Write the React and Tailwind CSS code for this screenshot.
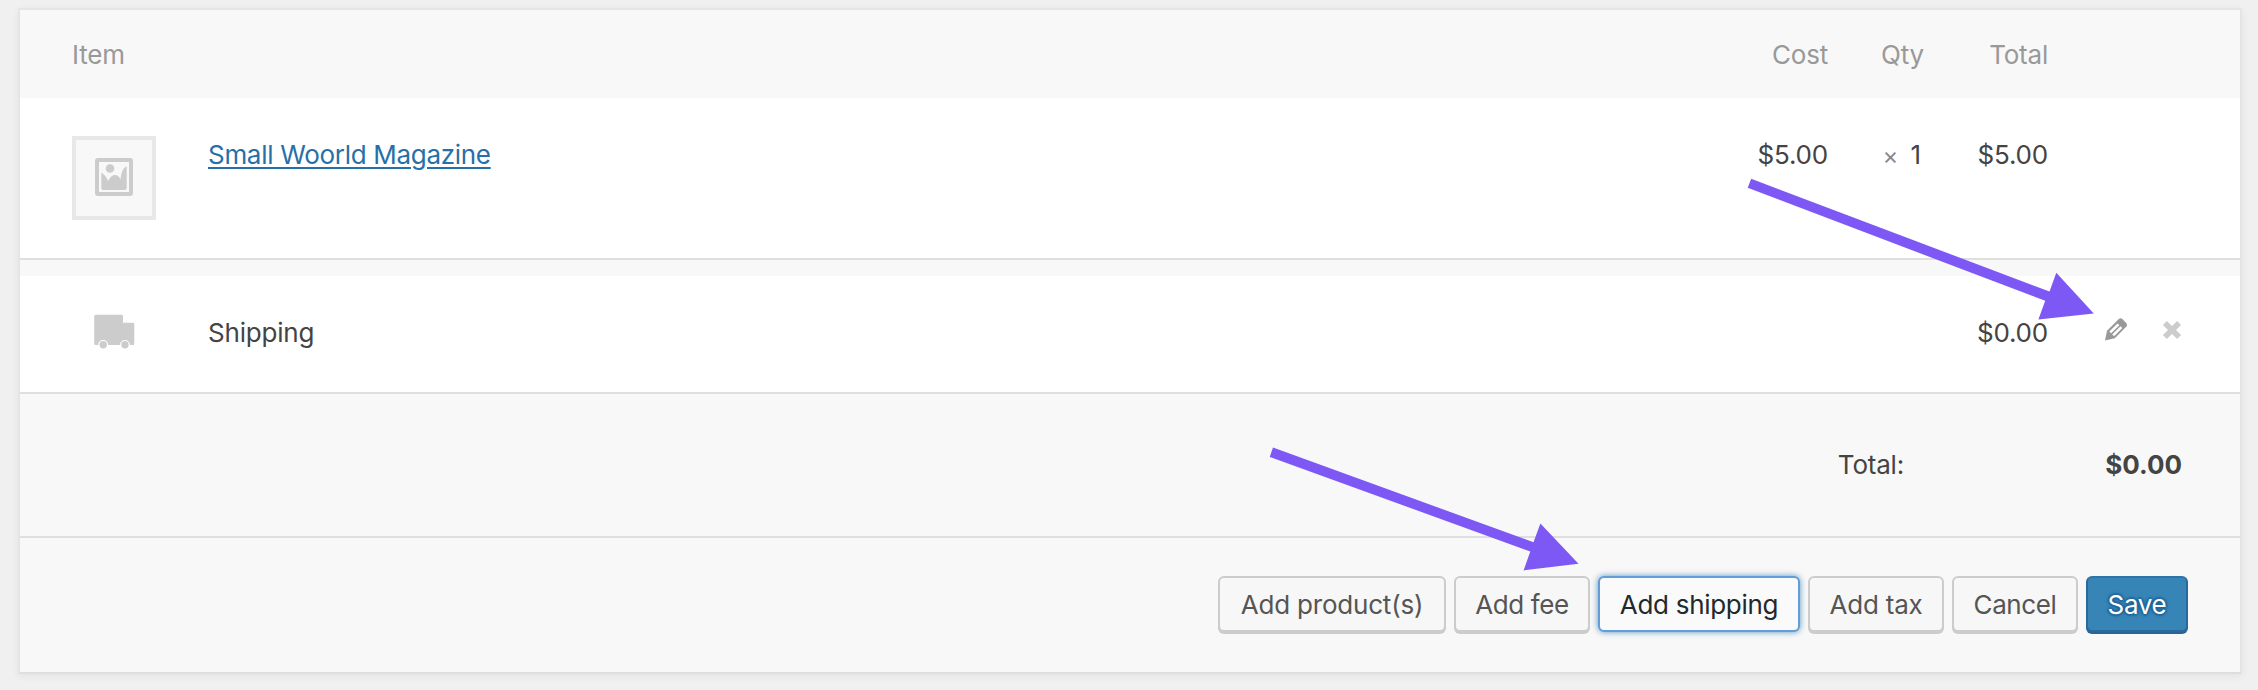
function ImageIcon() {
  return (
    <svg width="38" height="38" viewBox="0 0 38 38" fill="#ccc">
      <path fillRule="evenodd" d="M3 0H35Q38 0 38 3V35Q38 38 35 38H3Q0 38 0 35V3Q0 0 3 0ZM4 4V34H34V4Z" />
      <circle cx="15" cy="10.5" r="4.3" />
      <path d="M6.3 14.5C9.5 16.5 12 19.5 13 23C15.5 18.500 18 17 20 17C22.500 17 24.500 18.800 25.600 21.500C26 15 28 9.500 31.700 8.500V30Q31.700 32 29.700 32H8.300Q6.300 32 6.300 30Z" />
    </svg>
  );
}

function TruckIcon() {
  return (
    <svg width="41" height="36" viewBox="0 0 41 36" fill="#ccc">
      <path d="M1.500 0.700H27.500Q29 0.700 29 2.200V8.800H39Q40.300 8.800 40.300 10.100V29.500Q40.300 31 38.800 31H36A5 5 0 0 0 26 31H14.200A5 5 0 0 0 4.200 31H1.500Q0.200 31 0.200 29.500V2.200Q0.200 0.700 1.500 0.700Z" />
      <circle cx="9.200" cy="30.800" r="3.700" />
      <circle cx="31" cy="30.800" r="3.700" />
    </svg>
  );
}

function PencilIcon() {
  return (
    <svg width="22" height="23" viewBox="0 0 22 23">
      <path fill="#999" d="M0 22.500L2 12.800L13.600 1.200Q15.500 -0.500 17.300 1L21.200 5Q22.800 7 21.200 8.800L9.800 20.200Z" />
      <path fill="#fff" d="M4.300 13.600L12.500 5.400L17.300 10.100L9.100 18.300Z" />
      <path fill="none" stroke="#999" strokeWidth="1.600" d="M5.900 16.600L15.700 7" />
    </svg>
  );
}

function CrossIcon() {
  return (
    <svg width="20" height="20" viewBox="0 0 20 20">
      <path d="M2.900 2.900L17.100 17.100M17.100 2.900L2.900 17.100" stroke="#ccc" strokeWidth="5.600" />
    </svg>
  );
}

function Arrows() {
  return (
    <svg className="pointer-events-none absolute left-0 top-0" width="2258" height="690" fill="#7e58f5">
      <path d="M1751.200 178.800L2049.500 291.600L2056.300 272.700L2093.800 313.600L2038.400 319.600L2045.200 300.800L1747.700 187.800Z" />
      <path d="M1273 447.600L1533.500 542.200L1540.400 523.400L1578.500 563.800L1523.600 570.400L1530.300 551.500L1269.700 456.900Z" />
    </svg>
  );
}

const baseButton = "flex h-14 items-center justify-center whitespace-nowrap rounded-[6px] border-2 pt-px text-[26px]";
const plain = "border-[#ccc] bg-[#f7f7f7] text-[#555] shadow-[0_2px_0_#ccc]";
const buttons = [
  { label: "Add product(s)", look: plain, size: "w-[228px] tracking-[-0.2px]" },
  { label: "Add fee", look: plain, size: "w-[136px] tracking-[-0.4px]" },
  {
    label: "Add shipping",
    look: "border-[#649cd7] bg-[#fafafa] text-[#23282d] shadow-[0_0_6px_rgba(0,95,160,0.65)]",
    size: "w-[202px] tracking-[-0.3px]",
  },
  { label: "Add tax", look: plain, size: "w-[136px] tracking-[-0.2px]" },
  { label: "Cancel", look: plain, size: "w-[126px] tracking-[-0.4px]" },
  {
    label: "Save",
    look: "border-[#2a6a9b] border-t-[#2e74a8] bg-[#3784b6] text-white shadow-[0_2px_0_#2a6496] [text-shadow:0_-2px_2px_#1f6699,2px_0_2px_#1f6699,0_2px_2px_#1f6699,-2px_0_2px_#1f6699]",
    size: "w-[102px] tracking-[-0.3px]",
  },
];

export default function App() {
  return (
    <div className="relative h-[690px] w-[2258px] overflow-hidden bg-[#f0f0f0] pl-[18px] pt-2 font-['Inter',sans-serif] text-[26px] leading-[36px] text-[#444]">
      <section className="flex h-[666px] w-[2224px] flex-col border-2 border-[#e5e5e5] border-b-[#dedede] bg-[#f8f8f8] shadow-[0_2px_8px_rgba(0,0,0,0.06)]">
        <header className="flex h-[88px] items-start pl-[52px] pr-[192px] pt-[27px] tracking-[-0.2px] text-[#999]">
          <span className="flex-1">Item</span>
          <span className="w-24 text-right">Cost</span>
          <span className="w-24 text-right">Qty</span>
          <span className="w-[124px] text-right">Total</span>
        </header>

        <div className="flex h-[162px] items-start border-b-2 border-[#dfdfdf] bg-white pl-[52px] pr-[192px]">
          <div className="mt-[38px] flex size-[84px] items-center justify-center border-4 border-[#e8e8e8] bg-[#f8f8f8] pb-0.5">
            <ImageIcon />
          </div>
          <div className="flex flex-1 items-start pl-[52px] pt-[39px]">
            <a className="flex-1 tracking-[-0.3px] text-[#2670a9] underline decoration-2 underline-offset-[3px]">
              Small Woorld Magazine
            </a>
            <span className="w-24 text-right tracking-[-0.2px]">$5.00</span>
            <span className="flex w-24 items-baseline justify-end gap-[12px] pr-[3px]">
              <small className="text-[24px] text-[#888]">×</small>1
            </span>
            <span className="w-[124px] text-right tracking-[-0.2px]">$5.00</span>
          </div>
        </div>

        <div className="mt-4 flex h-[118px] items-start border-b-2 border-[#dfdfdf] bg-white pl-[74px] pr-[58px]">
          <div className="mt-[38px] w-[114px]">
            <TruckIcon />
          </div>
          <span className="flex-1 pt-[39px] tracking-[-0.2px]">Shipping</span>
          <span className="pt-[39px] tracking-[-0.2px]">$0.00</span>
          <div className="flex items-center gap-[35px] pl-[57px] pt-[42px]">
            <PencilIcon />
            <CrossIcon />
          </div>
        </div>

        <div className="flex h-[144px] items-start justify-end border-b-2 border-[#dfdfdf] pr-[58px] pt-[53px]">
          <span className="tracking-[-0.2px]">Total:</span>
          <strong className="w-[278px] text-right font-bold">$0.00</strong>
        </div>

        <footer className="flex justify-end gap-2 pr-[52px] pt-[38px]">
          {buttons.map((b) => (
            <button key={b.label} className={`${baseButton} ${b.look} ${b.size}`}>
              {b.label}
            </button>
          ))}
        </footer>
      </section>
      <Arrows />
    </div>
  );
}
